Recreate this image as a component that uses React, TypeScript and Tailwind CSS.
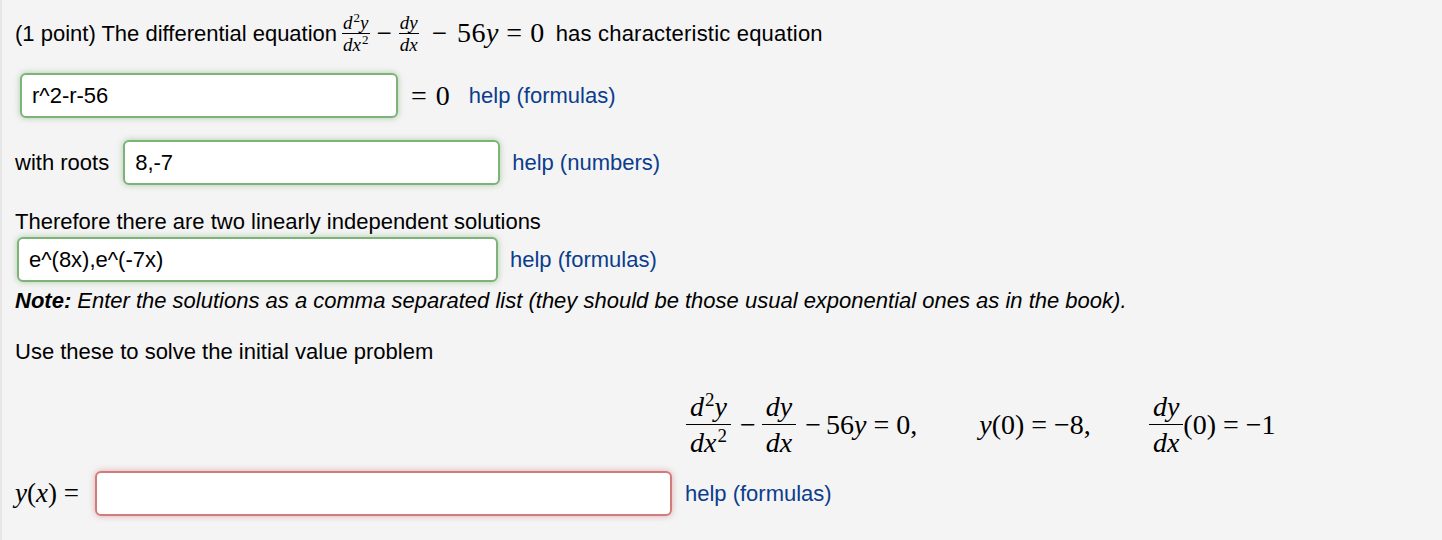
import type { ReactNode } from "react";

function Frac({ num, den, small }: { num: ReactNode; den: ReactNode; small?: boolean }) {
  return (
    <span
      className={
        small
          ? "inline-flex flex-col items-center text-[19px] leading-none italic"
          : "inline-flex flex-col items-center text-[28px] leading-none italic"
      }
    >
      <span className={small ? "border-b border-black px-[1px] pb-[1px]" : "border-b border-black px-[4px] pb-[3px]"}>
        {num}
      </span>
      <span className={small ? "px-[1px] pt-[1px]" : "px-[4px] pt-[4px]"}>{den}</span>
    </span>
  );
}

function Sup({ children, small }: { children: ReactNode; small?: boolean }) {
  return (
    <span
      className={
        small
          ? "not-italic text-[13px] relative -top-[7px] ml-[1px]"
          : "not-italic text-[19px] relative -top-[10px] ml-[1px]"
      }
    >
      {children}
    </span>
  );
}

function Help({ label }: { label: string }) {
  return <a className="text-[#0b3d8c] cursor-pointer">{label}</a>;
}

function Field({ value, w, bad }: { value?: string; w: string; bad?: boolean }) {
  return (
    <div
      className={
        bad
          ? `${w} h-[45px] rounded-[6px] border-2 border-[#d27b7b] bg-white shadow-[0_0_6px_rgba(210,110,110,0.55)] flex items-center px-[10px]`
          : `${w} h-[45px] rounded-[6px] border-2 border-[#7db378] bg-white shadow-[0_0_6px_rgba(110,170,105,0.55)] flex items-center px-[10px]`
      }
    >
      <span>{value}</span>
    </div>
  );
}

export default function App() {
  const serif = "font-['Liberation_Serif',serif]";
  return (
    <div className="h-[540px] w-full overflow-hidden bg-[#f4f4f4] border-l-2 border-[#e6e6e6] font-['Liberation_Sans',Arial,sans-serif] text-[22px] text-black">
      <div className="pl-[13px]">
        {/* question intro */}
        <div className="flex items-center h-[40px] mt-[13px]">
          <span>(1 point) The differential equation</span>
          <span className={`${serif} flex items-center ml-[5px]`}>
            <Frac
              small
              num={
                <>
                  d<Sup small>2</Sup>y
                </>
              }
              den={
                <>
                  dx<Sup small>2</Sup>
                </>
              }
            />
            <span className="text-[27px] mx-[7px]">−</span>
            <Frac small num="dy" den="dx" />
            <span className="text-[27px] ml-[13px]">−</span>
            <span className="text-[28px] ml-[10px] tracking-[0.5px]">
              56<i>y</i> = 0
            </span>
          </span>
          <span className="ml-[11px] tracking-[0.2px]">has characteristic equation</span>
        </div>

        <div className="flex items-center mt-[20px]">
          <div className="ml-[5px]">
            <Field value="r^2-r-56" w="w-[378px]" />
          </div>
          <span className={`${serif} text-[28px] ml-[13px] tracking-[1px]`}>= 0</span>
          <span className="ml-[18px]">
            <Help label="help (formulas)" />
          </span>
        </div>

        <div className="flex items-center mt-[22px]">
          <span>with roots</span>
          <div className="ml-[14px]">
            <Field value="8,-7" w="w-[377px]" />
          </div>
          <span className="ml-[12px]">
            <Help label="help (numbers)" />
          </span>
        </div>

        <div className="h-[26px] flex items-center mt-[23px]">Therefore there are two linearly independent solutions</div>

        <div className="flex items-center mt-[3px]">
          <div className="ml-[2px]">
            <Field value="e^(8x),e^(-7x)" w="w-[481px]" />
          </div>
          <span className="ml-[12px]">
            <Help label="help (formulas)" />
          </span>
        </div>

        <div className="h-[26px] flex items-center mt-[5px] italic">
          <b>Note:</b>
          <span className="ml-[6px]">
            Enter the solutions as a comma separated list (they should be those usual exponential ones as in the book).
          </span>
        </div>

        <div className="h-[26px] flex items-center mt-[25px]">Use these to solve the initial value problem</div>

        {/* display equation */}
        <div className={`${serif} flex items-center h-[70px] mt-[26px] pl-[671px] text-[28px]`}>
          <Frac
            num={
              <>
                d<Sup>2</Sup>y
              </>
            }
            den={
              <>
                dx<Sup>2</Sup>
              </>
            }
          />
          <span className="ml-[9px] mr-[6px]">−</span>
          <Frac num="dy" den="dx" />
          <span className="ml-[9px]">−</span>
          <span className="ml-[5px]">
            56<i>y</i> = 0,
          </span>
          <span className="ml-[62px]">
            <i>y</i>(0) = −8,
          </span>
          <span className="ml-[58px] flex items-center">
            <Frac num="dy" den="dx" />
            <span>(0) = −1</span>
          </span>
        </div>

        <div className="flex items-center mt-[11px]">
          <span className={`${serif} text-[27px]`}>
            <i>y</i>(<i>x</i>) =
          </span>
          <div className="ml-[16px]">
            <Field w="w-[577px]" bad />
          </div>
          <span className="ml-[13px]">
            <Help label="help (formulas)" />
          </span>
        </div>
      </div>
    </div>
  );
}
